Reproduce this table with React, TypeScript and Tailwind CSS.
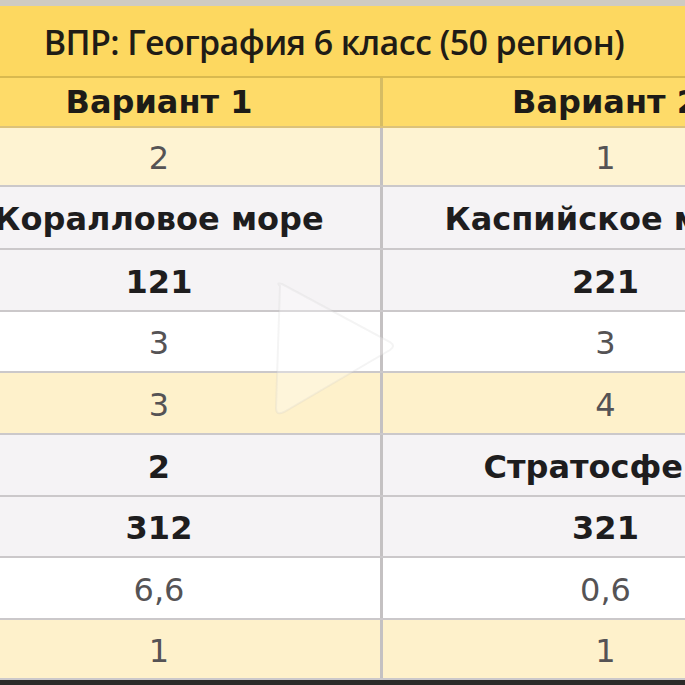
import React from "react";

type Row = {
  a: string;
  b: string;
  bold?: boolean;
  bg: string;
  h: string;
};

const rows: Row[] = [
  { a: "2", b: "1", bg: "bg-[#fef3d2]", h: "h-[59px]" },
  { a: "Коралловое море", b: "Каспийское море", bold: true, bg: "bg-[#f5f3f5]", h: "h-[63px]" },
  { a: "121", b: "221", bold: true, bg: "bg-[#f5f3f5]", h: "h-[62px]" },
  { a: "3", b: "3", bg: "bg-white", h: "h-[61px]" },
  { a: "3", b: "4", bg: "bg-[#fef1cb]", h: "h-[62px]" },
  { a: "2", b: "Стратосфера", bold: true, bg: "bg-[#f5f3f5]", h: "h-[62px]" },
  { a: "312", b: "321", bold: true, bg: "bg-[#f5f3f5]", h: "h-[61px]" },
  { a: "6,6", b: "0,6", bg: "bg-white", h: "h-[62px]" },
  { a: "1", b: "1", bg: "bg-[#fef1cb]", h: "h-[60px]" },
];

const cellFont = "font-['DejaVu_Sans',sans-serif] text-[32px]";

const App: React.FC = () => {
  return (
    <div className="relative w-[685px] h-[685px] overflow-hidden bg-[#2b2a28]">
      {/* top grey strip */}
      <div className="h-[6px] bg-[#cfcbc2]" />

      <div className="ml-[-62px] w-[890px]">
        {/* title */}
        <div className="h-[72px] bg-[#fdd860] border-b-2 border-[#d9b94f] flex items-center justify-center pr-[98px] pt-[2px]">
          <span className="font-['Open_Sans',sans-serif] font-semibold text-[34px] text-[#1f1c16] tracking-[-0.6px]">
            ВПР: География 6 класс (50 регион)
          </span>
        </div>

        {/* header */}
        <div className="h-[50px] bg-[#fedb69] grid grid-cols-2 border-b-2 border-[#dcc27a]">
          <div className={`flex items-center justify-center border-r-[3px] border-[#d6bc63] font-bold ${cellFont} text-[#1d1b17]`}>
            Вариант 1
          </div>
          <div className={`flex items-center justify-center font-bold ${cellFont} text-[#1d1b17]`}>
            Вариант 2
          </div>
        </div>

        {rows.map((r, i) => (
          <div
            key={i}
            className={`${r.h} ${r.bg} grid grid-cols-2 border-b-2 border-[#cbc8ca]`}
          >
            <div
              className={`flex items-center justify-center pt-[3px] border-r-[3px] border-[#c4c1c2] ${cellFont} ${
                r.bold ? "font-bold text-[#1e1d1e]" : "font-normal text-[#555355]"
              }`}
            >
              {r.a}
            </div>
            <div
              className={`flex items-center justify-center pt-[3px] ${cellFont} ${
                r.bold ? "font-bold text-[#1e1d1e]" : "font-normal text-[#555355]"
              }`}
            >
              {r.b}
            </div>
          </div>
        ))}
      </div>

      {/* faint play overlay */}
      <svg
        className="absolute left-[262px] top-[272px] pointer-events-none"
        width="140"
        height="150"
        viewBox="0 0 140 150"
      >
        <path
          d="M18 14 Q14 10 20 12 L128 70 Q134 74 128 78 L22 140 Q14 144 14 136 Z"
          fill="rgba(255,255,255,0.3)"
          stroke="rgba(200,200,200,0.2)"
          strokeWidth="2"
        />
      </svg>
    </div>
  );
};

export default App;
